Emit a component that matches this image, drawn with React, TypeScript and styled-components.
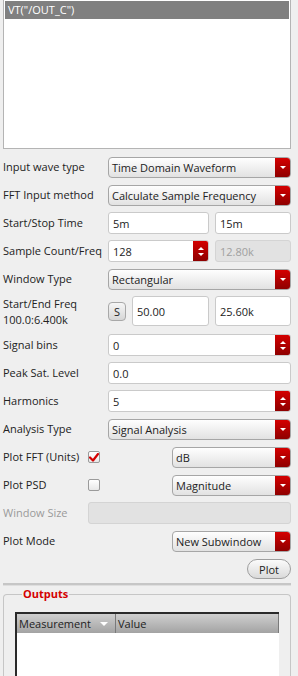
import React from "react";
import styled, { createGlobalStyle } from "styled-components";

const Global = createGlobalStyle`
  html, body { margin: 0; padding: 0; background: #efefef; }
  body { font-family: "Open Sans", "Noto Sans", sans-serif; font-size: 11px; color: #222; }
`;

const Page = styled.div`
  width: 298px;
  height: 676px;
  overflow: hidden;
  background: #efefef;
  display: flex;
  flex-direction: column;
`;

const ListBox = styled.div`
  margin: 0 7px 0 3px;
  height: 149px;
  flex: none;
  background: #fff;
  border: 1px solid #b4b4b4;
  border-top: none;
  box-sizing: border-box;
  padding: 1px 1px 0;
`;

const ListItem = styled.div`
  height: 18px;
  line-height: 18px;
  background: #808080;
  color: #fff;
  padding-left: 3px;
`;

const Form = styled.div`
  display: flex;
  flex-direction: column;
  gap: 6px;
  margin: 7px 7px 0 3px;
`;

const Row = styled.div<{ $h?: number; $top?: boolean }>`
  display: flex;
  align-items: ${(p) => (p.$top ? "flex-start" : "center")};
  height: ${(p) => p.$h ?? 22}px;
`;

const Label = styled.div<{ $w?: number; $disabled?: boolean }>`
  width: ${(p) => p.$w ?? 105}px;
  flex: none;
  color: ${(p) => (p.$disabled ? "#9a9a9a" : "#222")};
  line-height: 16px;
  white-space: nowrap;
`;

const Combo = styled.div<{ $w?: number }>`
  flex: ${(p) => (p.$w ? "none" : "1")};
  width: ${(p) => (p.$w ? `${p.$w}px` : "auto")};
  margin-left: auto;
  height: 21px;
  box-sizing: border-box;
  border: 1px solid #a6a6a6;
  border-radius: 4px;
  background: linear-gradient(#fefefe, #e2e2e2);
  display: flex;
  align-items: center;
  padding-left: 3px;
  overflow: hidden;
`;

const ComboText = styled.span`
  flex: 1;
  white-space: nowrap;
`;

const RedButton = styled.div`
  width: 15px;
  align-self: stretch;
  background: linear-gradient(#d40000, #8e0000);
  display: flex;
  flex-direction: column;
  align-items: center;
  justify-content: center;
  gap: 3px;
`;

const TriDown = styled.div`
  width: 0;
  height: 0;
  border-left: 3px solid transparent;
  border-right: 3px solid transparent;
  border-top: 3px solid #fff;
`;

const TriUp = styled.div`
  width: 0;
  height: 0;
  border-left: 3px solid transparent;
  border-right: 3px solid transparent;
  border-bottom: 3px solid #fff;
`;

const Field = styled.div<{ $w?: number; $disabled?: boolean; $h?: number }>`
  flex: ${(p) => (p.$w ? "none" : "1")};
  width: ${(p) => (p.$w ? `${p.$w}px` : "auto")};
  height: ${(p) => p.$h ?? 22}px;
  box-sizing: border-box;
  background: ${(p) => (p.$disabled ? "#e2e2e2" : "#fff")};
  border: 1px solid ${(p) => (p.$disabled ? "#d4d4d4" : "#cacaca")};
  border-radius: 3px;
  display: flex;
  align-items: center;
  padding-left: 4px;
  color: ${(p) => (p.$disabled ? "#a0a0a0" : "#222")};
  overflow: hidden;
`;

const Spin = styled(Field)`
  padding-right: 0;
`;

const SpinText = styled.span`
  flex: 1;
`;

const Gap = styled.div<{ $w: number }>`
  width: ${(p) => p.$w}px;
  flex: none;
`;

const SButton = styled.div`
  width: 18px;
  height: 19px;
  margin-top: 6px;
  box-sizing: border-box;
  border: 1px solid #a8a8a8;
  border-radius: 4px;
  background: linear-gradient(#f6f6f6, #d6d6d6);
  display: flex;
  align-items: center;
  justify-content: center;
  flex: none;
`;

const Check = styled.div`
  width: 12px;
  height: 12px;
  box-sizing: border-box;
  border: 1px solid #9a9a9a;
  border-radius: 2px;
  background: linear-gradient(#fff, #e8e8e8);
  display: flex;
  align-items: center;
  justify-content: center;
  flex: none;
  margin-left: -20px;
`;

const Spacer = styled.div`
  flex: 1;
`;

const PlotButton = styled.div`
  width: 44px;
  height: 20px;
  box-sizing: border-box;
  border: 1px solid #9e9e9e;
  border-radius: 10px;
  background: linear-gradient(#fbfbfb, #dadada);
  display: flex;
  align-items: center;
  justify-content: center;
  margin-left: auto;
`;

const Separator = styled.div`
  margin: 3px 7px 0 3px;
  height: 3px;
  flex: none;
  border-top: 2px solid #c6c6c6;
  border-bottom: 1px solid #dedede;
  box-sizing: border-box;
`;

const Group = styled.fieldset`
  margin: 2px 7px 0 3px;
  padding: 12px 11px 0 11px;
  border: 1px solid #c6c6c6;
  border-bottom: none;
  border-radius: 4px 4px 0 0;
  flex: 1;
  min-height: 0;
  display: flex;
  flex-direction: column;
`;

const Legend = styled.legend`
  color: #d40000;
  font-weight: bold;
  padding: 0 1px;
  margin-left: 7px;
  line-height: 12px;
`;

const Table = styled.div`
  flex: 1;
  border-top: 2px solid #2a2a2a;
  border-left: 2px solid #2a2a2a;
  background: #fff;
  display: flex;
  flex-direction: column;
`;

const Header = styled.div`
  height: 19px;
  display: flex;
  background: linear-gradient(#cfcfcf, #a3a3a3);
`;

const HeadCell = styled.div<{ $w?: number }>`
  width: ${(p) => (p.$w ? `${p.$w}px` : "auto")};
  flex: ${(p) => (p.$w ? "none" : "1")};
  display: flex;
  align-items: center;
  padding-left: 2px;
  border-right: 1px solid #7a7a7a;
  box-sizing: border-box;
  color: #222;
`;

const SortArrow = styled.div`
  margin-left: auto;
  margin-right: 7px;
  width: 0;
  height: 0;
  border-left: 4px solid transparent;
  border-right: 4px solid transparent;
  border-top: 4px solid #fff;
`;

const ComboBox = ({ text, w }: { text: string; w?: number }) => (
  <Combo $w={w}>
    <ComboText>{text}</ComboText>
    <RedButton>
      <TriDown />
    </RedButton>
  </Combo>
);

const SpinBox = ({ text, w }: { text: string; w?: number }) => (
  <Spin $w={w}>
    <SpinText>{text}</SpinText>
    <RedButton>
      <TriUp />
      <TriDown />
    </RedButton>
  </Spin>
);

const CheckMark = () => (
  <svg width="10" height="9" viewBox="0 0 10 9">
    <path d="M1 4.5 L4 7.5 L9 1" stroke="#d40000" strokeWidth="2.2" fill="none" strokeLinecap="round" strokeLinejoin="round" />
  </svg>
);

export default function App() {
  return (
    <Page>
      <Global />
      <ListBox>
        <ListItem>VT("/OUT_C")</ListItem>
      </ListBox>
      <Form>
        <Row>
          <Label>Input wave type</Label>
          <ComboBox text="Time Domain Waveform" />
        </Row>
        <Row>
          <Label>FFT Input method</Label>
          <ComboBox text="Calculate Sample Frequency" />
        </Row>
        <Row>
          <Label>Start/Stop Time</Label>
          <Field $w={101}>5m</Field>
          <Gap $w={6} />
          <Field>15m</Field>
        </Row>
        <Row>
          <Label>Sample Count/Freq</Label>
          <SpinBox text="128" w={101} />
          <Gap $w={6} />
          <Field $disabled>12.80k</Field>
        </Row>
        <Row>
          <Label>Window Type</Label>
          <ComboBox text="Rectangular" />
        </Row>
        <Row $h={32} $top>
          <Label>
            Start/End Freq
            <br />
            100.0:6.400k
          </Label>
          <SButton>S</SButton>
          <Gap $w={6} />
          <Field $w={77} $h={30}>50.00</Field>
          <Gap $w={6} />
          <Field $h={30}>25.60k</Field>
        </Row>
        <Row>
          <Label>Signal bins</Label>
          <SpinBox text="0" />
        </Row>
        <Row>
          <Label>Peak Sat. Level</Label>
          <Field>0.0</Field>
        </Row>
        <Row>
          <Label>Harmonics</Label>
          <SpinBox text="5" />
        </Row>
        <Row>
          <Label>Analysis Type</Label>
          <ComboBox text="Signal Analysis" />
        </Row>
        <Row>
          <Label>Plot FFT (Units)</Label>
          <Check>
            <CheckMark />
          </Check>
          <Spacer />
          <ComboBox text="dB" w={119} />
        </Row>
        <Row>
          <Label>Plot PSD</Label>
          <Check />
          <Spacer />
          <ComboBox text="Magnitude" w={119} />
        </Row>
        <Row>
          <Label $w={85} $disabled>Window Size</Label>
          <Field $disabled />
        </Row>
        <Row>
          <Label>Plot Mode</Label>
          <Spacer />
          <ComboBox text="New Subwindow" w={119} />
        </Row>
        <Row>
          <PlotButton>Plot</PlotButton>
        </Row>
      </Form>
      <Separator />
      <Group>
        <Legend>Outputs</Legend>
        <Table>
          <Header>
            <HeadCell $w={99}>
              Measurement
              <SortArrow />
            </HeadCell>
            <HeadCell>Value</HeadCell>
          </Header>
        </Table>
      </Group>
    </Page>
  );
}
